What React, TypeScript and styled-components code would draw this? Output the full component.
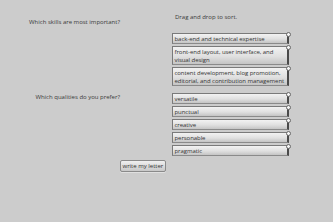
import React from "react";
import styled, { createGlobalStyle } from "styled-components";

const Global = createGlobalStyle`
  html, body { margin: 0; padding: 0; background: #cccccc; }
  body { font-family: "Open Sans", "DejaVu Sans", sans-serif; color: #3a3a3a; }
`;

const Page = styled.div`
  width: 333px;
  height: 222px;
  background: #cccccc;
  padding-top: 13px;
  box-sizing: border-box;
`;

const Section = styled.div<{ $mt: number }>`
  display: flex;
  margin-top: ${(p) => p.$mt}px;
`;

const Label = styled.div<{ $pt: number }>`
  width: 120px;
  text-align: right;
  font-size: 6px;
  line-height: 8px;
  padding-top: ${(p) => p.$pt}px;
  color: #3a3a3a;
`;

const Column = styled.div`
  margin-left: 52px;
  display: flex;
  flex-direction: column;
`;

const Heading = styled.div`
  font-size: 6px;
  line-height: 8px;
  padding-left: 3px;
  margin-bottom: 12px;
`;

const List = styled.div`
  display: flex;
  flex-direction: column;
  gap: 2px;
`;

const Item = styled.div`
  position: relative;
  width: 117px;
  box-sizing: border-box;
  padding: 0.5px 0 0.5px 1.5px;
  font-size: 6px;
  letter-spacing: -0.06px;
  line-height: 8px;
  color: #333;
  border: 1px solid #7a7a7a;
  border-right: 2px solid #4a4a4a;
  border-bottom-color: #8a8a8a;
  background: linear-gradient(#f2f2f2 0%, #e0e0e0 55%, #c4c4c4 100%);
`;

const Handle = styled.span`
  position: absolute;
  top: -2.5px;
  right: -4px;
  width: 3.5px;
  height: 3.5px;
  border-radius: 50%;
  background: #f4f4f4;
  border: 1px solid #666;
`;

const ButtonRow = styled.div`
  display: flex;
  padding-left: 120px;
  margin-top: 4px;
`;

const Button = styled.button`
  font-family: "Open Sans", "DejaVu Sans", sans-serif;
  font-size: 6px;
  line-height: 8px;
  color: #333;
  padding: 0.5px 1.5px 1px;
  border: 1px solid #8a8a8a;
  border-radius: 2px;
  background: linear-gradient(#f0f0f0, #c8c8c8);
  box-shadow: 0 1px 0 #e0e0e0;
`;

const skills = [
  "back-end and technical expertise",
  "front-end layout, user interface, and visual design",
  "content development, blog promotion, editorial, and contribution management",
];

const qualities = ["versatile", "punctual", "creative", "personable", "pragmatic"];

export default function App() {
  return (
    <Page>
      <Global />
      <Section $mt={0}>
        <Label $pt={5}>Which skills are most important?</Label>
        <Column>
          <Heading>Drag and drop to sort.</Heading>
          <List>
            {skills.map((s) => (
              <Item key={s}>
                {s}
                <Handle />
              </Item>
            ))}
          </List>
        </Column>
      </Section>
      <Section $mt={7}>
        <Label $pt={0}>Which qualities do you prefer?</Label>
        <Column>
          <List>
            {qualities.map((s) => (
              <Item key={s}>
                {s}
                <Handle />
              </Item>
            ))}
          </List>
        </Column>
      </Section>
      <ButtonRow>
        <Button>write my letter</Button>
      </ButtonRow>
    </Page>
  );
}
